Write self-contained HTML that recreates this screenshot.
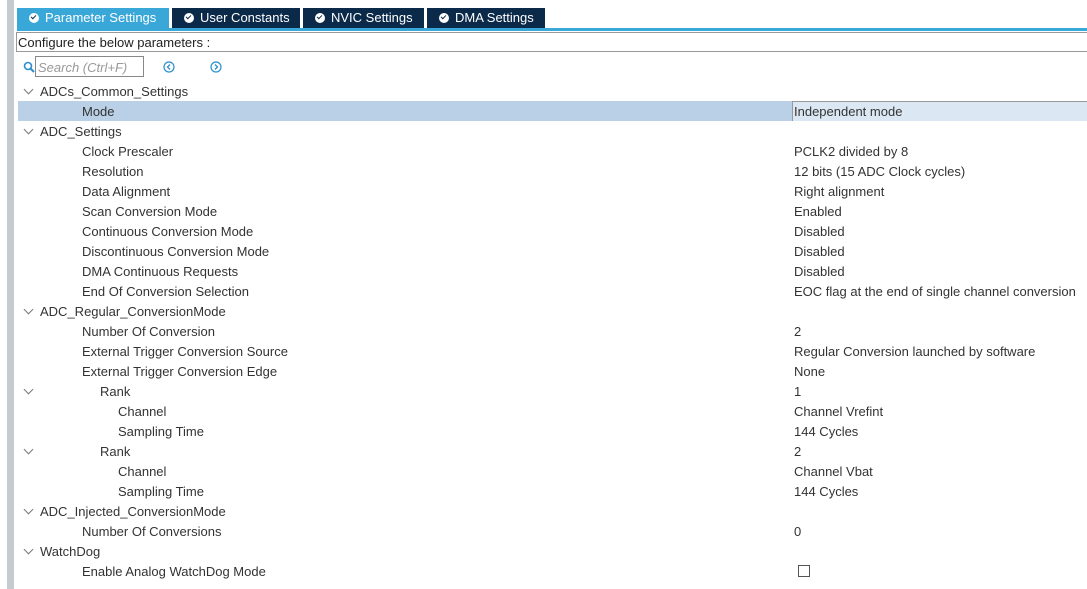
<!DOCTYPE html>
<html><head><style>
body{margin:0;width:1087px;height:589px;background:#fff;font-family:"Liberation Sans",sans-serif;font-size:13px;color:#333;position:relative;overflow:hidden}
.bar{position:absolute;left:7px;top:0;width:7px;height:589px;background:#c5cbd0}
.tab{position:absolute;top:8px;height:20px;line-height:20px;color:#fff;font-size:13px;background:#0b2a4a}
.tab .ck{display:inline-block;width:10px;height:10px;border-radius:50%;background:#fff;position:relative;vertical-align:-1px;margin:0 6px 0 12px}
.tab .ck:after{content:"";position:absolute;left:2px;top:2px;width:4px;height:2px;border-left:1.5px solid #0b2a4a;border-bottom:1.5px solid #0b2a4a;transform:rotate(-45deg)}
.row{position:absolute;left:17px;width:1070px;height:20px;line-height:21px}
.row span{position:absolute}
.v{left:777px}
.chev{position:absolute;width:6px;height:6px;border-right:1px solid #777;border-bottom:1px solid #777;transform:rotate(45deg)}
</style></head><body>
<div class="bar"></div>
<div class="tab" style="left:17px;width:152px;background:#3aa7d9"><span class="ck"></span>Parameter Settings</div>
<div class="tab" style="left:172px;width:128px"><span class="ck"></span>User Constants</div>
<div class="tab" style="left:303px;width:121px"><span class="ck"></span>NVIC Settings</div>
<div class="tab" style="left:427px;width:118px"><span class="ck"></span>DMA Settings</div>
<div style="position:absolute;left:17px;top:28px;width:1070px;height:3px;background:#3aa7d9"></div>
<div style="position:absolute;left:16px;top:32px;width:1071px;height:18px;border:1px solid #999;border-right:none;line-height:20px;color:#222"><span style="margin-left:1px">Configure the below parameters :</span></div>
<svg style="position:absolute;left:23px;top:61px" width="12" height="12"><circle cx="5" cy="5" r="3.5" fill="none" stroke="#2a8fd0" stroke-width="1.6"/><line x1="7.5" y1="7.5" x2="11" y2="11" stroke="#2a8fd0" stroke-width="2"/></svg>
<div style="position:absolute;left:35px;top:56px;width:107px;height:19px;border:1px solid #888;color:#999;font-style:italic;line-height:21px"><span style="margin-left:2px">Search (Ctrl+F)</span></div>
<svg style="position:absolute;left:163px;top:61px" width="12" height="12"><circle cx="6" cy="6" r="5" fill="none" stroke="#2a8fd0" stroke-width="1.2"/><path d="M7 3.5L4.5 6L7 8.5" fill="none" stroke="#2a8fd0" stroke-width="1.3"/></svg>
<div style="position:absolute;left:18px;top:101px;width:774px;height:20px;background:#b9d0e6"></div>
<svg style="position:absolute;left:210px;top:61px" width="12" height="12"><circle cx="6" cy="6" r="5" fill="none" stroke="#2a8fd0" stroke-width="1.2"/><path d="M5 3.5L7.5 6L5 8.5" fill="none" stroke="#2a8fd0" stroke-width="1.3"/></svg>
<div style="position:absolute;left:792px;top:101px;width:295px;height:19px;background:#dbe8f4;border-left:1px solid #999;border-top:1px solid #999"></div>

<div class="row" style="top:81px"><i class="chev" style="left:8px;top:5px"></i><span style="left:23px">ADCs_Common_Settings</span></div>
<div class="row" style="top:101px"><span style="left:65px">Mode</span><span class="v">Independent mode</span></div>
<div class="row" style="top:121px"><i class="chev" style="left:8px;top:5px"></i><span style="left:23px">ADC_Settings</span></div>
<div class="row" style="top:141px"><span style="left:65px">Clock Prescaler</span><span class="v">PCLK2 divided by 8</span></div>
<div class="row" style="top:161px"><span style="left:65px">Resolution</span><span class="v">12 bits (15 ADC Clock cycles)</span></div>
<div class="row" style="top:181px"><span style="left:65px">Data Alignment</span><span class="v">Right alignment</span></div>
<div class="row" style="top:201px"><span style="left:65px">Scan Conversion Mode</span><span class="v">Enabled</span></div>
<div class="row" style="top:221px"><span style="left:65px">Continuous Conversion Mode</span><span class="v">Disabled</span></div>
<div class="row" style="top:241px"><span style="left:65px">Discontinuous Conversion Mode</span><span class="v">Disabled</span></div>
<div class="row" style="top:261px"><span style="left:65px">DMA Continuous Requests</span><span class="v">Disabled</span></div>
<div class="row" style="top:281px"><span style="left:65px">End Of Conversion Selection</span><span class="v">EOC flag at the end of single channel conversion</span></div>
<div class="row" style="top:301px"><i class="chev" style="left:8px;top:5px"></i><span style="left:23px">ADC_Regular_ConversionMode</span></div>
<div class="row" style="top:321px"><span style="left:65px">Number Of Conversion</span><span class="v">2</span></div>
<div class="row" style="top:341px"><span style="left:65px">External Trigger Conversion Source</span><span class="v">Regular Conversion launched by software</span></div>
<div class="row" style="top:361px"><span style="left:65px">External Trigger Conversion Edge</span><span class="v">None</span></div>
<div class="row" style="top:381px"><i class="chev" style="left:8px;top:5px"></i><span style="left:83px">Rank</span><span class="v">1</span></div>
<div class="row" style="top:401px"><span style="left:101px">Channel</span><span class="v">Channel Vrefint</span></div>
<div class="row" style="top:421px"><span style="left:101px">Sampling Time</span><span class="v">144 Cycles</span></div>
<div class="row" style="top:441px"><i class="chev" style="left:8px;top:5px"></i><span style="left:83px">Rank</span><span class="v">2</span></div>
<div class="row" style="top:461px"><span style="left:101px">Channel</span><span class="v">Channel Vbat</span></div>
<div class="row" style="top:481px"><span style="left:101px">Sampling Time</span><span class="v">144 Cycles</span></div>
<div class="row" style="top:501px"><i class="chev" style="left:8px;top:5px"></i><span style="left:23px">ADC_Injected_ConversionMode</span></div>
<div class="row" style="top:521px"><span style="left:65px">Number Of Conversions</span><span class="v">0</span></div>
<div class="row" style="top:541px"><i class="chev" style="left:8px;top:5px"></i><span style="left:23px">WatchDog</span></div>
<div class="row" style="top:561px"><span style="left:65px">Enable Analog WatchDog Mode</span><span style="left:781px;top:4px;width:10px;height:10px;border:1px solid #555"></span></div>
</body></html>
